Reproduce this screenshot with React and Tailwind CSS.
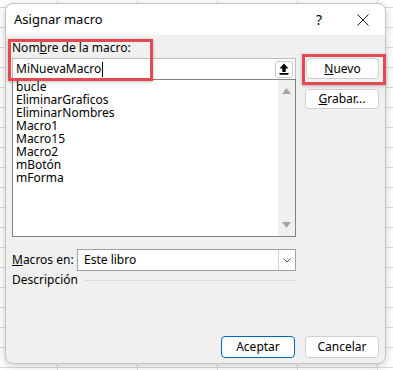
import React from 'react';

const macros = ['bucle', 'EliminarGraficos', 'EliminarNombres', 'Macro1', 'Macro15', 'Macro2', 'mBotón', 'mForma'];

const Btn = ({ children, primary, className = '' }) => (
  <div
    className={`flex items-center justify-center bg-white rounded-[4px] text-[12px] text-black ${
      primary ? 'border border-[#0067c0]' : 'border border-[#d0d0d0]'
    } ${className}`}
  >
    {children}
  </div>
);

export default function App() {
  return (
    <div className="w-[393px] h-[370px] overflow-hidden bg-white pl-[5px] pt-[3px] font-['Noto_Sans',sans-serif] [background-image:linear-gradient(to_right,#dadada_1px,transparent_1px),linear-gradient(to_bottom,#dadada_1px,transparent_1px)] [background-size:80px_20px] [background-position:57px_7px]">
      <div className="relative w-[381px] h-[361px] rounded-[8px] border border-[#c4c4c4] bg-[#f0f0f0] shadow-[0_2px_8px_rgba(0,0,0,0.2)] flex flex-col overflow-visible">
        {/* title bar */}
        <div className="h-[31px] shrink-0 bg-white rounded-t-[8px] flex items-center pl-[8px] pr-[16px]">
          <span className="text-[13px] text-black">Asignar macro</span>
          <span className="ml-auto text-[14px] text-black mr-[35px]">?</span>
          <svg width="12" height="12" viewBox="0 0 12 12">
            <path d="M0.5 0.5 L11.5 11.5 M11.5 0.5 L0.5 11.5" stroke="#1a1a1a" strokeWidth="1" />
          </svg>
        </div>

        {/* body */}
        <div className="flex flex-col flex-1 min-h-0">
          <div className="flex pl-[6px]">
            <div className="w-[284px] flex flex-col">
              <div className="mt-[5px] h-[16px] text-[12px] leading-[16px] text-black">
                Nom<span className="underline">b</span>re de la macro:
              </div>
              <div className="mt-[2px] h-[21px] bg-white border border-[#bdbdbd] border-b-0 flex items-center pl-[3px] pr-[2px]">
                <span className="text-[12px] text-black leading-[16px]">MiNuevaMacro</span>
                <span className="w-px h-[15px] bg-black ml-[1px]" />
                <div className="ml-auto w-[18px] h-[17px] border border-[#c8c8c8] rounded-[3px] bg-white flex items-center justify-center">
                  <svg width="10" height="12" viewBox="0 0 10 12">
                    <path d="M5 0.5 L9.5 5.5 L6.7 5.5 L6.7 9 L3.3 9 L3.3 5.5 L0.5 5.5 Z" fill="#000" />
                    <rect x="0.5" y="10" width="9" height="1.8" fill="#000" />
                  </svg>
                </div>
              </div>
              <div className="h-[158px] bg-white border border-[#828282] flex">
                <div className="flex-1 pl-[3px]">
                  {macros.map((m) => (
                    <div key={m} className="h-[13px] text-[12px] leading-[13px] text-black">
                      {m}
                    </div>
                  ))}
                </div>
                <div className="w-[17px] bg-[#f0f0f0] flex flex-col items-center justify-between py-[8px]">
                  <svg width="9" height="6" viewBox="0 0 9 6">
                    <path d="M0 6 L4.5 0 L9 6 Z" fill="#a3a3a3" />
                  </svg>
                  <svg width="9" height="6" viewBox="0 0 9 6">
                    <path d="M0 0 L4.5 6 L9 0 Z" fill="#a3a3a3" />
                  </svg>
                </div>
              </div>

              <div className="mt-[12px] flex items-center">
                <span className="w-[65px] text-[12px] leading-[16px] text-black">
                  <span className="underline">M</span>acros en:
                </span>
                <div className="flex-1 h-[22px] bg-white border border-[#a0a0a0] flex items-center pl-[6px]">
                  <span className="text-[12px] text-black">Este libro</span>
                  <div className="ml-auto w-[17px] h-full border-l border-[#d0d0d0] flex items-center justify-center">
                    <svg width="8" height="5" viewBox="0 0 8 5">
                      <path d="M0.5 0.5 L4 4 L7.5 0.5" stroke="#555" strokeWidth="1" fill="none" />
                    </svg>
                  </div>
                </div>
              </div>

              <div className="mt-[1px] flex items-center">
                <span className="text-[12px] leading-[16px] text-black">Descripción</span>
                <div className="flex-1 h-px bg-[#dcdcdc] ml-[6px]" />
              </div>
            </div>

            <div className="ml-[9px] w-[74px] flex flex-col pt-[23px]">
              <Btn className="h-[21px] w-[73px] ml-[1px]">
                <span>
                  <span className="underline">N</span>uevo
                </span>
              </Btn>
              <Btn className="h-[20px] mt-[10px]">
                <span>
                  <span className="underline">G</span>rabar...
                </span>
              </Btn>
            </div>
          </div>

          <div className="mt-auto mb-[5px] flex justify-end pr-[6px] gap-[10px]">
            <Btn primary className="w-[74px] h-[22px]">Aceptar</Btn>
            <Btn className="w-[74px] h-[22px]">Cancelar</Btn>
          </div>
        </div>

        {/* annotation boxes */}
        <div className="absolute left-[2px] top-[35px] w-[145px] h-[42px] border-[3px] border-[#e5484f] shadow-[0_1px_3px_rgba(0,0,0,0.25)]" />
        <div className="absolute left-[296px] top-[50px] w-[84px] h-[31px] border-[3px] border-[#e5484f] shadow-[0_1px_3px_rgba(0,0,0,0.25)]" />
      </div>
    </div>
  );
}
